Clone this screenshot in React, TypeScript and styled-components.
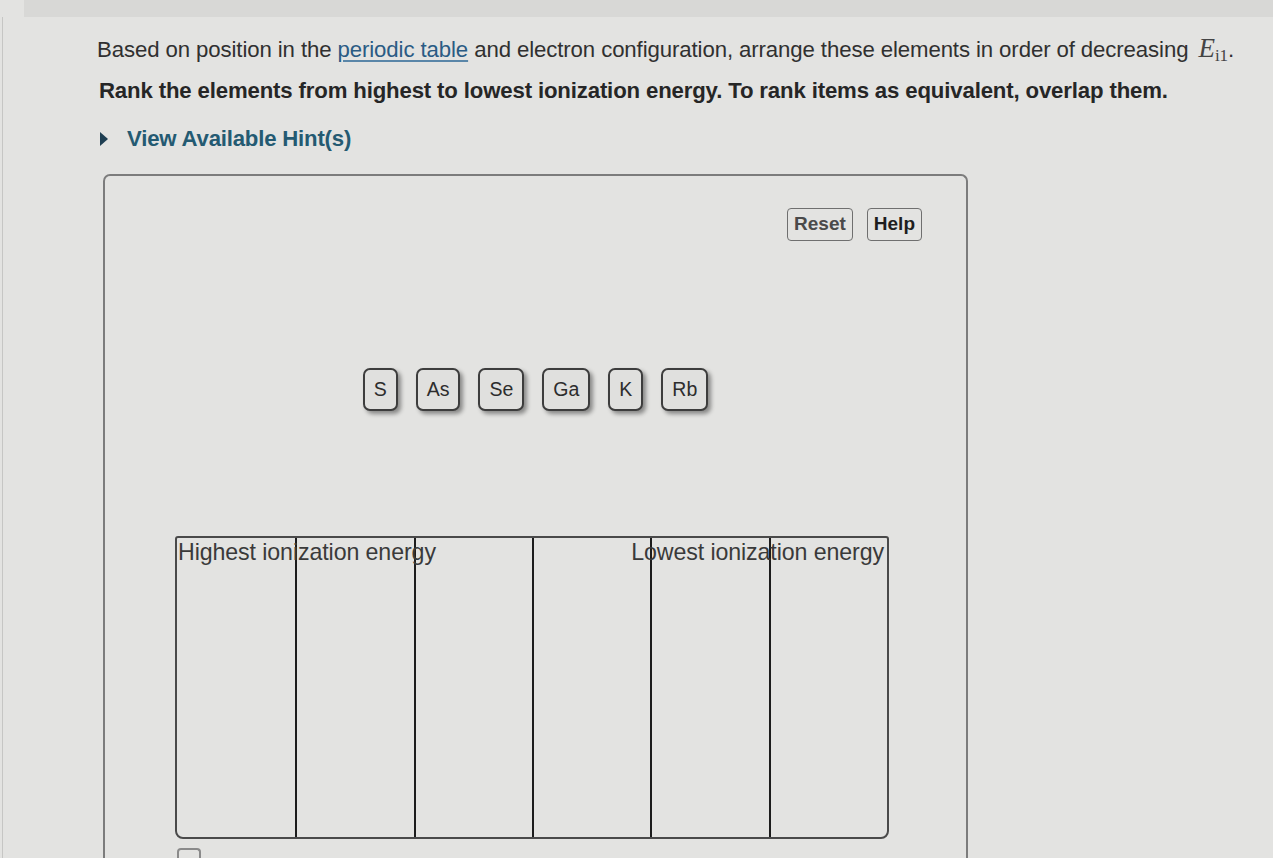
import React from 'react';
import styled, { createGlobalStyle } from 'styled-components';

const GlobalStyle = createGlobalStyle`
    html, body {
        margin: 0;
        padding: 0;
        background: #e2e2e0;
        font-family: 'Liberation Sans', Arial, sans-serif;
        color: #2b2b2b;
    }
    #root {
        min-height: 858px;
    }
`;

const Page = styled.div`
    width: 1273px;
    height: 858px;
    overflow: hidden;
    position: relative;
    background: #e3e3e1;
`;

const TopStrip = styled.div`
    height: 17px;
    margin-left: 24px;
    background: #d8d8d6;
`;

const Content = styled.div`
    padding: 15px 0 0 97px;
`;

const Prompt = styled.p`
    margin: 0;
    font-size: 22.2px;
    line-height: 32px;
    color: #303030;
    letter-spacing: -0.1px;
    white-space: nowrap;
`;

const TableLink = styled.a`
    color: #2a5b84;
    text-decoration: underline;
    text-decoration-color: #5a86a8;
    text-underline-offset: 3px;
`;

const MathE = styled.span`
    font-family: 'Liberation Serif', 'Times New Roman', serif;
    font-style: italic;
    font-size: 27px;
    color: #444;
    margin-left: 4px;
`;

const MathSub = styled.sub`
    font-family: 'Liberation Serif', 'Times New Roman', serif;
    font-size: 17px;
    color: #444;
    vertical-align: -4px;
`;

const Instruction = styled.p`
    margin: 4px 0 0 2px;
    font-size: 22.2px;
    font-weight: bold;
    line-height: 30px;
    color: #262626;
    letter-spacing: -0.15px;
    white-space: nowrap;
`;

const HintToggle = styled.div`
    display: flex;
    align-items: center;
    gap: 19px;
    margin: 20px 0 0 3px;
    font-size: 22.2px;
    font-weight: bold;
    color: #245a72;
    letter-spacing: -0.2px;
`;

const Arrow = styled.span`
    width: 0;
    height: 0;
    border-top: 7px solid transparent;
    border-bottom: 7px solid transparent;
    border-left: 8px solid #1f3f52;
`;

const Panel = styled.div`
    margin: 22px 0 0 6px;
    width: 865px;
    height: 720px;
    border: 2px solid #7c7c7c;
    border-bottom: none;
    border-radius: 7px 7px 0 0;
    box-sizing: border-box;
    padding-top: 32px;
`;

const Toolbar = styled.div`
    display: flex;
    justify-content: flex-end;
    gap: 14px;
    padding-right: 44px;
`;

const ToolButton = styled.button`
    font-family: 'Liberation Sans', Arial, sans-serif;
    font-size: 19px;
    font-weight: bold;
    color: ${p => (p.$dark ? '#1e1e1e' : '#4a4a4a')};
    background: transparent;
    border: 1.5px solid #6f6f6f;
    border-radius: 4px;
    padding: 4px 6px 5px;
    line-height: 22px;
`;

const Tray = styled.div`
    display: flex;
    justify-content: center;
    gap: 18px;
    margin-top: 127px;
`;

const Tile = styled.div`
    height: 43px;
    min-width: 33px;
    box-sizing: border-box;
    padding: 0 9px;
    display: flex;
    align-items: center;
    justify-content: center;
    font-size: 19.5px;
    color: #2d2d2d;
    background: #e0e0de;
    border: 2.5px solid #3d3d3d;
    border-radius: 7px;
    box-shadow: 3px 3px 4px rgba(0, 0, 0, 0.4);
`;

const RankArea = styled.div`
    position: relative;
    margin: 125px 0 0 70px;
    width: 714px;
    height: 303px;
    box-sizing: border-box;
    border: 2.5px solid #4a4a4a;
    border-radius: 3px 3px 8px 8px;
    display: grid;
    grid-template-columns: repeat(6, 1fr);
`;

const Slot = styled.div`
    border-left: ${p => (p.$first ? 'none' : '2px solid #1c1c1c')};
`;

const Labels = styled.div`
    position: absolute;
    top: 0;
    left: 0;
    right: 0;
    display: flex;
    justify-content: space-between;
    padding: 0 3px 0 1px;
    font-size: 23.2px;
    line-height: 28px;
    letter-spacing: -0.1px;
    color: #3a3a3a;
    pointer-events: none;
`;

const CheckRow = styled.div`
    display: flex;
    gap: 8px;
    margin: 9px 0 0 72px;
`;

const CheckBox = styled.div`
    width: 20px;
    height: 14px;
    border: 2px solid #8a8a8a;
    border-bottom: none;
    border-radius: 4px 4px 0 0;
`;

const LeftEdge = styled.div`
    position: absolute;
    top: 17px;
    left: 2px;
    bottom: 0;
    width: 1px;
    background: #c6c6c4;
`;

const elements = ['S', 'As', 'Se', 'Ga', 'K', 'Rb'];

export default function App() {
    return (
        <>
            <GlobalStyle />
            <Page>
                <LeftEdge />
                <TopStrip />
                <Content>
                    <Prompt>
                        Based on position in the <TableLink>periodic table</TableLink> and electron configuration, arrange these
                        elements in order of decreasing <MathE>E</MathE>
                        <MathSub>i1</MathSub>.
                    </Prompt>
                    <Instruction>
                        Rank the elements from highest to lowest ionization energy. To rank items as equivalent, overlap them.
                    </Instruction>
                    <HintToggle>
                        <Arrow />
                        View Available Hint(s)
                    </HintToggle>
                    <Panel>
                        <Toolbar>
                            <ToolButton>Reset</ToolButton>
                            <ToolButton $dark>Help</ToolButton>
                        </Toolbar>
                        <Tray>
                            {elements.map(el => (
                                <Tile key={el}>{el}</Tile>
                            ))}
                        </Tray>
                        <RankArea>
                            {[0, 1, 2, 3, 4, 5].map(i => (
                                <Slot key={i} $first={i === 0} />
                            ))}
                            <Labels>
                                <span>Highest ionization energy</span>
                                <span>Lowest ionization energy</span>
                            </Labels>
                        </RankArea>
                        <CheckRow>
                            <CheckBox />
                        </CheckRow>
                    </Panel>
                </Content>
            </Page>
        </>
    );
}
